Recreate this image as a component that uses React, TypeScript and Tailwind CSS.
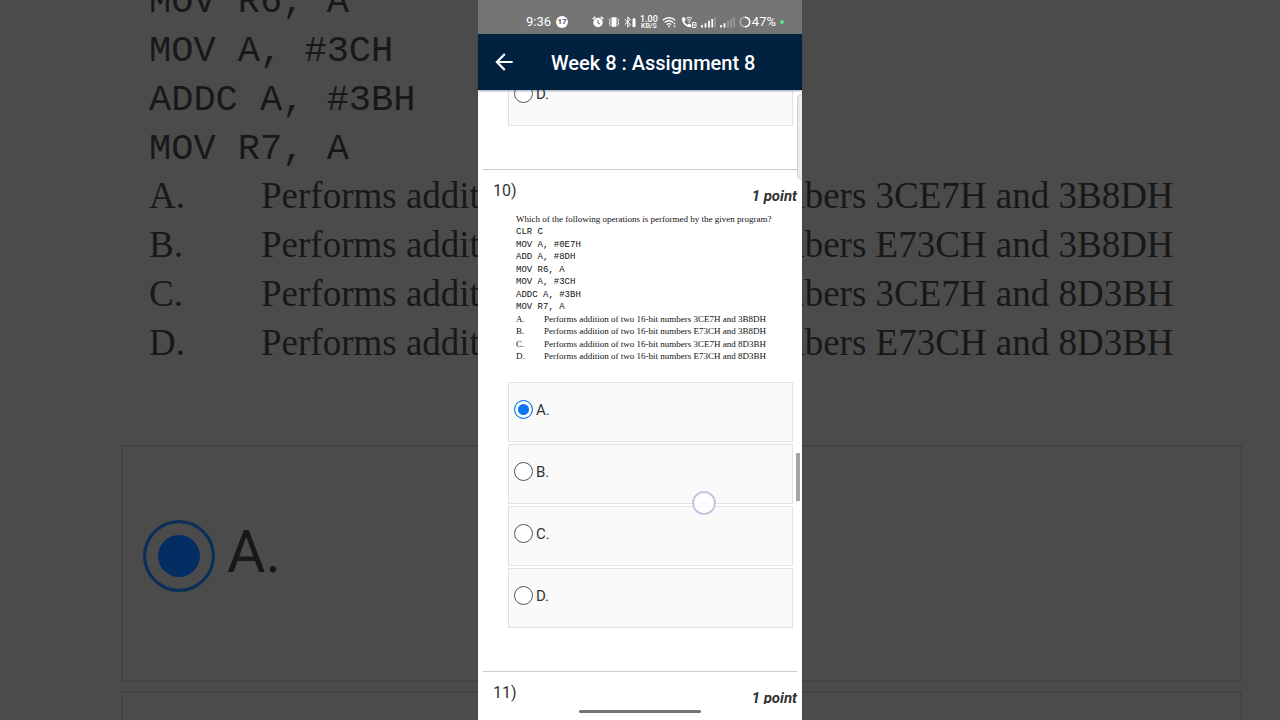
import { useState } from "react";
import { MdArrowBack } from "react-icons/md";

const CODE_LINES = [
  "CLR C",
  "MOV A, #0E7H",
  "ADD A, #8DH",
  "MOV R6, A",
  "MOV A, #3CH",
  "ADDC A, #3BH",
  "MOV R7, A",
];

const CHOICES = [
  { letter: "A.", text: "Performs addition of two 16-bit numbers 3CE7H and 3B8DH" },
  { letter: "B.", text: "Performs addition of two 16-bit numbers E73CH and 3B8DH" },
  { letter: "C.", text: "Performs addition of two 16-bit numbers 3CE7H and 8D3BH" },
  { letter: "D.", text: "Performs addition of two 16-bit numbers E73CH and 8D3BH" },
];

const OPTIONS = ["A.", "B.", "C.", "D."];

function StatusIcons() {
  return (
    <div className="flex items-center gap-1 text-white">
      {/* alarm */}
      <svg viewBox="0 0 24 24" className="h-3 w-3">
        <circle cx="12" cy="13" r="9.5" fill="currentColor" />
        <path d="M1.5 6 6.5 1.8M22.5 6l-5-4.2" stroke="currentColor" strokeWidth="3" fill="none" />
        <path d="M12 8v5.5l4 2.5" stroke="#757575" strokeWidth="2.2" fill="none" />
      </svg>
      {/* vibrate */}
      <svg viewBox="0 0 24 24" className="h-3 w-3">
        <rect x="7" y="2.5" width="10" height="19" rx="1" fill="currentColor" />
        <path
          d="M4.500 5 2.500 8l2 3-2 3 2 3-2 2.500M19.500 5l2 3-2 3 2 3-2 3 2 2.500"
          stroke="currentColor"
          strokeWidth="1.800"
          fill="none"
        />
      </svg>
      {/* bluetooth with device battery */}
      <svg viewBox="0 0 24 24" className="h-3 w-3">
        <path d="M1.5 7 13 17l-5.5 5V2L13 7 1.5 17" stroke="currentColor" strokeWidth="2" fill="none" />
        <path d="M17 6h1.5V4h3v2H23v16h-6z" fill="currentColor" />
      </svg>
      <div className="flex w-[18px] flex-col items-center text-[9px] leading-[7px] font-medium">
        <span>1.00</span>
        <span className="text-[7px] leading-[6px]">KB/S</span>
      </div>
      {/* wifi */}
      <svg viewBox="0 0 30 24" className="h-3 w-[15px]">
        <path
          d="M1.5 8.5a18 18 0 0 1 25 0M5.5 13a12 12 0 0 1 17 0M9.5 17.3a6.500 6.500 0 0 1 9 0"
          stroke="currentColor"
          strokeWidth="2.6"
          fill="none"
        />
        <path d="m14 23-3-3.5h6z" fill="currentColor" />
        <path d="m25 13 2.5 3.5h-5zM25 23l2.5-3.5h-5z" fill="currentColor" />
      </svg>
      {/* wifi calling */}
      <svg viewBox="0 0 32 24" className="h-3 w-4">
        <path d="M2 3.5 6.5 2l3 5.5-3 3c1.5 3.5 3.5 5.5 6.5 7l3-2.5 5 3-1.5 4.5C10 23 1 14 2 3.5z" fill="currentColor" />
        <path d="M11 4.500a10 10 0 0 1 11 0M13 8.500a6 6 0 0 1 7 0" stroke="currentColor" strokeWidth="2" fill="none" />
        <circle cx="16.5" cy="12" r="1.6" fill="currentColor" />
        <rect x="23" y="13" width="7" height="10" rx="1" stroke="currentColor" strokeWidth="2" fill="none" />
        <path d="M26.5 16v4" stroke="currentColor" strokeWidth="2" />
      </svg>
      {/* sim 1 */}
      <svg viewBox="0 0 30 24" className="h-3 w-[15px]">
        <path d="M2 18v5M9 14.5V23M16 9.5V23M22.500 6v17" stroke="currentColor" strokeWidth="3.5" />
        <path d="M28 2v21" stroke="currentColor" strokeOpacity="0.3" strokeWidth="3" />
      </svg>
      {/* sim 2 */}
      <svg viewBox="0 0 30 24" className="h-3 w-[15px]">
        <path d="M2 18v5M9 14.5V23" stroke="currentColor" strokeWidth="3.5" />
        <path d="M16 9.5V23M22 6v17M28 2v21" stroke="currentColor" strokeOpacity="0.3" strokeWidth="3" />
      </svg>
      <div className="flex items-center gap-px">
        {/* battery ring */}
        <svg viewBox="0 0 24 24" className="h-3 w-3">
          <circle cx="12" cy="12" r="9.5" stroke="currentColor" strokeOpacity="0.45" strokeWidth="3" fill="none" />
          <path d="M12 2.5a9.5 9.5 0 0 1 0 19" stroke="currentColor" strokeWidth="3" fill="none" />
        </svg>
        <span className="text-[13px] leading-4">47%</span>
      </div>
      <span className="h-1 w-1 rounded-full bg-[#5fe08a]" />
    </div>
  );
}

interface OptionProps {
  name: string;
  label: string;
  checked: boolean;
  onSelect: () => void;
}

function Option({ name, label, checked, onSelect }: OptionProps) {
  return (
    <label className="flex h-[60px] items-center gap-[3px] border border-[#e2e2e2] bg-[#fafafa] pb-[5px] pl-[5px] text-[15px] leading-5 text-[#333]">
      <input
        type="radio"
        name={name}
        checked={checked}
        onChange={onSelect}
        className="h-[19px] w-[19px] appearance-none rounded-full border border-[#555] bg-white checked:border-[#0b76f0] checked:bg-[#0b76f0] checked:shadow-[inset_0_0_0_3px_white]"
      />
      {label}
    </label>
  );
}

function QuestionHeader({ number }: { number: number }) {
  return (
    <div className="flex justify-between pl-[10px] text-[#333]">
      <h2 className="text-base leading-6">{number})</h2>
      <span className="mt-[7px] text-[15px] leading-5 font-bold italic">1 point</span>
    </div>
  );
}

// Enlarged, dimmed copy of the question behind the phone
function Backdrop() {
  return (
    <div
      aria-hidden="true"
      className="col-start-1 row-start-1 min-w-0 overflow-hidden bg-[#4b4b4b] whitespace-nowrap text-[#181818]"
    >
      <div className="-mt-[25px] pl-[149px] font-['Liberation_Serif',serif] text-[37px] leading-[49px]">
        {CODE_LINES.slice(3).map((line) => (
          <p key={line}>
            <code className="font-['Liberation_Mono',monospace] leading-none whitespace-pre">{line}</code>
          </p>
        ))}
        {CHOICES.map((choice) => (
          <p key={choice.letter} className="flex">
            <span className="w-28 shrink-0">{choice.letter}</span>
            <span>{choice.text}</span>
          </p>
        ))}
      </div>
      <div className="mt-[78px] mr-[38px] ml-[121px] flex flex-col gap-[9px]">
        <label className="flex h-[237px] items-center gap-3 border-2 border-[#444] pb-4 pl-5 text-[59px] leading-[64px]">
          <input
            type="radio"
            name="backdrop"
            defaultChecked
            tabIndex={-1}
            className="h-[72px] w-[72px] appearance-none rounded-full border-[3px] border-[#0b2f57] bg-[#032e63] shadow-[inset_0_0_0_12px_#4b4b4b]"
          />
          <span className="pb-2">A.</span>
        </label>
        <div className="h-[237px] border-2 border-[#444]" />
      </div>
    </div>
  );
}

export default function App() {
  const [answers, setAnswers] = useState<Record<string, string>>({ q10: "A." });

  const select = (question: string, option: string) => {
    setAnswers((prev) => ({ ...prev, [question]: option }));
  };

  return (
    <div className="grid h-screen grid-cols-1 grid-rows-1 overflow-hidden font-[Roboto,sans-serif]">
      <Backdrop />

      <div className="relative z-10 col-start-1 row-start-1 flex min-h-0 w-[324px] flex-col justify-self-center bg-white">
        <div className="flex h-[34px] shrink-0 items-center justify-between bg-[#757575] pt-[10px] pr-[18px] pl-12 text-white">
          <div className="flex items-center gap-[5px]">
            <span className="text-[13px] leading-4">9:36</span>
            <span className="h-3 w-3 rounded-full bg-white text-center text-[8px] leading-3 font-bold text-[#555]">
              17
            </span>
          </div>
          <StatusIcons />
        </div>

        <header className="z-10 flex h-14 shrink-0 items-center bg-[#00213f] pl-[13px] text-white shadow-[0_1px_2px_#00213f66]">
          <button type="button" aria-label="Back" className="w-[60px]">
            <MdArrowBack size={26} />
          </button>
          <h1 className="pt-[2px] text-xl font-medium">Week 8 : Assignment 8</h1>
        </header>

        <main className="min-h-0 flex-1 overflow-hidden px-[5px]">
          <section className="-mt-6 border-b border-[#ccc] pb-[43px]">
            <div className="mr-1 ml-[25px]">
              <Option
                name="q9"
                label="D."
                checked={answers.q9 === "D."}
                onSelect={() => select("q9", "D.")}
              />
            </div>
          </section>

          <section className="border-b border-[#ccc] pt-[9px] pb-[43px]">
            <QuestionHeader number={10} />
            <div className="mt-[7px] ml-[33px] flex h-[149px] flex-col justify-between font-['Liberation_Serif',serif] text-[9px] leading-3 whitespace-nowrap text-[#111]">
              <p>Which of the following operations is performed by the given program?</p>
              {CODE_LINES.map((line) => (
                <p key={line}>
                  <code className="font-['Liberation_Mono',monospace] leading-none whitespace-pre">{line}</code>
                </p>
              ))}
              {CHOICES.map((choice) => (
                <p key={choice.letter} className="flex">
                  <span className="w-7">{choice.letter}</span>
                  <span>{choice.text}</span>
                </p>
              ))}
            </div>
            <div className="mt-5 mr-1 ml-[25px] flex flex-col gap-[2px]">
              {OPTIONS.map((option) => (
                <Option
                  key={option}
                  name="q10"
                  label={option}
                  checked={answers.q10 === option}
                  onSelect={() => select("q10", option)}
                />
              ))}
            </div>
          </section>

          <section className="pt-[9px]">
            <QuestionHeader number={11} />
          </section>
        </main>

        <div className="z-10 flex h-4 shrink-0 items-center justify-center bg-white pb-[2px]">
          <div className="h-[3px] w-[122px] rounded-full bg-[#757575]" />
        </div>

        {/* edge panel handle, scroll thumb and touch marker */}
        <div className="absolute top-[94px] right-0 h-[86px] w-[5px] rounded-l-md border border-r-0 border-[#d0d0d0] bg-[#ebebeb]" />
        <div className="absolute top-[453px] right-[2px] h-12 w-1 bg-[#a6a6a6]" />
        <div className="absolute top-[491px] left-[214px] h-6 w-6 rounded-full border-2 border-[#c9c7de] bg-white/80" />
      </div>
    </div>
  );
}
